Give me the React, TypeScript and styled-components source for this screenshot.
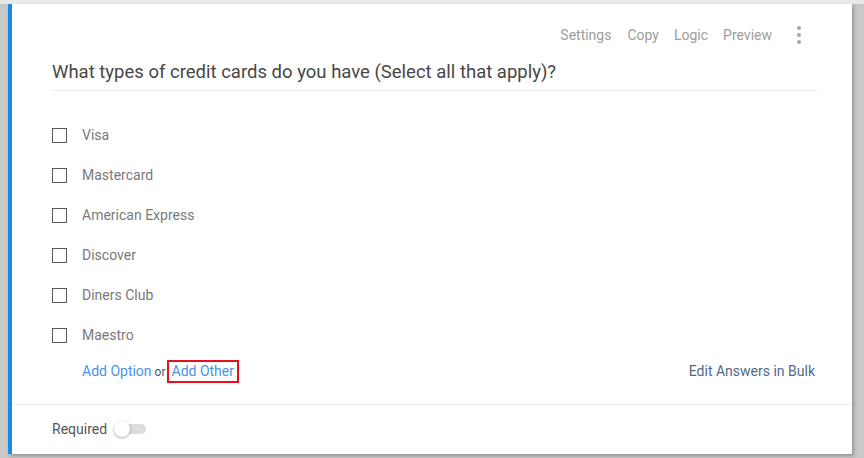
import React from 'react';
import styled, { createGlobalStyle } from 'styled-components';

const GlobalStyle = createGlobalStyle`
  html, body {
    margin: 0;
    padding: 0;
    background: #c8c8c8;
    font-family: Roboto, "Liberation Sans", sans-serif;
  }
`;

const Page = styled.div`
  width: 864px;
  height: 458px;
  padding: 4px 12px 4px 8px;
  box-sizing: border-box;
  background: linear-gradient(#e9e9e9 0 4px, #c8c8c8 4px);
`;

const Card = styled.section`
  height: 450px;
  box-sizing: border-box;
  background: #fff;
  border-left: 4px solid #1b8ae6;
  box-shadow: 2px 2px 3px rgba(0, 0, 0, 0.25);
  display: flex;
  flex-direction: column;
`;

const Body = styled.div`
  padding: 20px 35px 0 40px;
  display: flex;
  flex-direction: column;
`;

const Toolbar = styled.div`
  height: 22px;
  display: flex;
  align-items: center;
  justify-content: flex-end;
  gap: 15px;
  padding-right: 16px;
`;

const ToolLink = styled.span`
  font-size: 14px;
  color: #9d9d9d;
  &:first-child {
    margin-right: 1px;
  }
`;

const Kebab = styled.span`
  display: flex;
  flex-direction: column;
  gap: 3px;
  margin-left: 10px;
  & > i {
    width: 4px;
    height: 4px;
    border-radius: 50%;
    background: #a6a6a6;
  }
`;

const Title = styled.h2`
  margin: 14px 0 0;
  padding-bottom: 6px;
  font-size: 18.5px;
  line-height: 24px;
  font-weight: 400;
  color: #474747;
  border-bottom: 1px solid #ebebeb;
`;

const Options = styled.ul`
  list-style: none;
  margin: 24px 0 0;
  padding: 0;
`;

const Option = styled.li`
  height: 40px;
  display: flex;
  align-items: center;
  gap: 15px;
`;

const Box = styled.span`
  width: 15px;
  height: 15px;
  box-sizing: border-box;
  border: 1.5px solid #585858;
  flex: none;
`;

const Label = styled.span`
  font-size: 14px;
  color: #7a7a7a;
`;

const Actions = styled.div`
  height: 32px;
  display: flex;
  align-items: center;
  padding-left: 30px;
`;

const Link = styled.a<{ $boxed?: boolean }>`
  font-size: 14px;
  color: #4b93e6;
  text-decoration: none;
  padding: 1px 3px 2px;
  border: 2px solid ${(p) => (p.$boxed ? '#e8101b' : 'transparent')};
  margin-left: ${(p) => (p.$boxed ? '0' : '-5px')};
`;

const Or = styled.span`
  font-size: 12px;
  color: #555;
  margin: 2px 1px 0 -2px;
`;

const BulkLink = styled.a`
  margin-left: auto;
  margin-right: 2px;
  font-size: 14px;
  color: #4f6986;
  text-decoration: none;
`;

const Footer = styled.div`
  margin-top: 17px;
  border-top: 1px solid #efefef;
  height: 48px;
  display: flex;
  align-items: center;
  padding-left: 40px;
  gap: 7px;
`;

const Required = styled.span`
  font-size: 14px;
  color: #555;
`;

const Switch = styled.span`
  position: relative;
  width: 32px;
  height: 18px;
  display: inline-block;
  &::before {
    content: '';
    position: absolute;
    left: 4px;
    right: 0;
    top: 4px;
    height: 10px;
    border-radius: 5px;
    background: #dcdcdc;
  }
  &::after {
    content: '';
    position: absolute;
    left: 0;
    top: 1px;
    width: 16px;
    height: 16px;
    border-radius: 50%;
    background: #fff;
    box-shadow: 0 1px 3px rgba(0, 0, 0, 0.35);
  }
`;

const choices = ['Visa', 'Mastercard', 'American Express', 'Discover', 'Diners Club', 'Maestro'];

export default function App() {
  return (
    <>
      <GlobalStyle />
      <Page>
        <Card>
          <Body>
            <Toolbar>
              <ToolLink>Settings</ToolLink>
              <ToolLink>Copy</ToolLink>
              <ToolLink>Logic</ToolLink>
              <ToolLink>Preview</ToolLink>
              <Kebab>
                <i />
                <i />
                <i />
              </Kebab>
            </Toolbar>
            <Title>What types of credit cards do you have (Select all that apply)?</Title>
            <Options>
              {choices.map((c) => (
                <Option key={c}>
                  <Box />
                  <Label>{c}</Label>
                </Option>
              ))}
            </Options>
            <Actions>
              <Link href="#">Add Option</Link>
              <Or>or</Or>
              <Link href="#" $boxed>
                Add Other
              </Link>
              <BulkLink href="#">Edit Answers in Bulk</BulkLink>
            </Actions>
          </Body>
          <Footer>
            <Required>Required</Required>
            <Switch />
          </Footer>
        </Card>
      </Page>
    </>
  );
}
